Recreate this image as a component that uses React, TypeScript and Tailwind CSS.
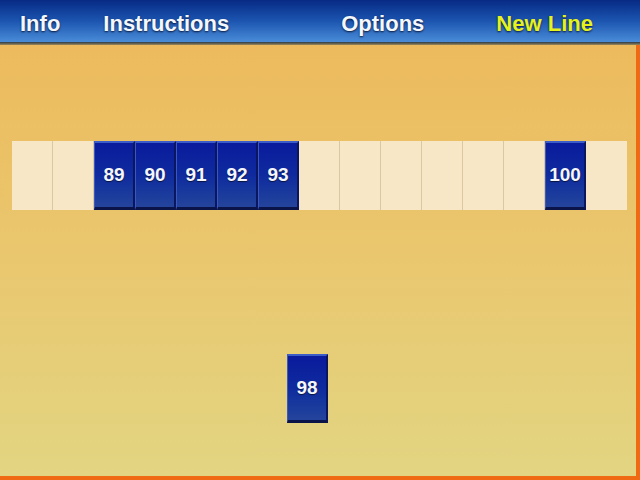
import React from "react";

const cells: (number | null)[] = [null, null, 89, 90, 91, 92, 93, null, null, null, null, null, null, 100, null];

function Tile({ n }: { n: number }) {
  return (
    <div className="w-[41px] h-[69px] flex items-center justify-center bg-gradient-to-b from-[#0a1a9c] via-[#0f2a9e] to-[#24449c] border-t-[2px] border-l-[1px] border-r-[2px] border-b-[3px] border-t-[#3c5cc8] border-l-[#3a58c0] border-r-[#0a1660] border-b-[#0a1448] text-[#f4f6fc] font-bold text-[19px] [text-shadow:0_1px_1px_rgba(0,0,0,0.6)]">
      {n}
    </div>
  );
}

export default function App() {
  return (
    <div className="w-[640px] h-[480px] flex flex-col overflow-hidden bg-gradient-to-b from-[#edb859] via-[#eac66d] to-[#e2d582]" style={{ fontFamily: '"Liberation Sans", Arial, sans-serif' }}>
      <div className="h-[45px] shrink-0 flex flex-col">
        <div className="h-[42px] flex items-center bg-gradient-to-b from-[#082a85] via-[#1c55b0] to-[#4a8cd8] text-[22px] font-bold text-[#f4f8fc] [text-shadow:0_1px_2px_rgba(0,0,20,0.8)] pt-[5px]">
          <span className="ml-[20px]">Info</span>
          <span className="ml-[43px]">Instructions</span>
          <span className="ml-[112px]">Options</span>
          <span className="ml-[72px] text-[#e6f21c]">New Line</span>
        </div>
        <div className="h-[3px] bg-gradient-to-b from-[#2f3a44] to-[#9a8a5a]" />
      </div>
      <div className="flex-1 flex flex-col border-r-[4px] border-b-[4px] border-[#ef6a12]">
        <div className="mt-[96px] ml-[12px] flex">
          {cells.map((c, i) =>
            c === null ? (
              <div key={i} className="w-[41px] h-[69px] bg-[#f8e7c6] border-r border-[#dcc8a0] last:border-r-0" />
            ) : (
              <Tile key={i} n={c} />
            )
          )}
        </div>
        <div className="mt-[144px] ml-[287px]">
          <div className="w-[40px]">
            <Tile n={98} />
          </div>
        </div>
      </div>
    </div>
  );
}
